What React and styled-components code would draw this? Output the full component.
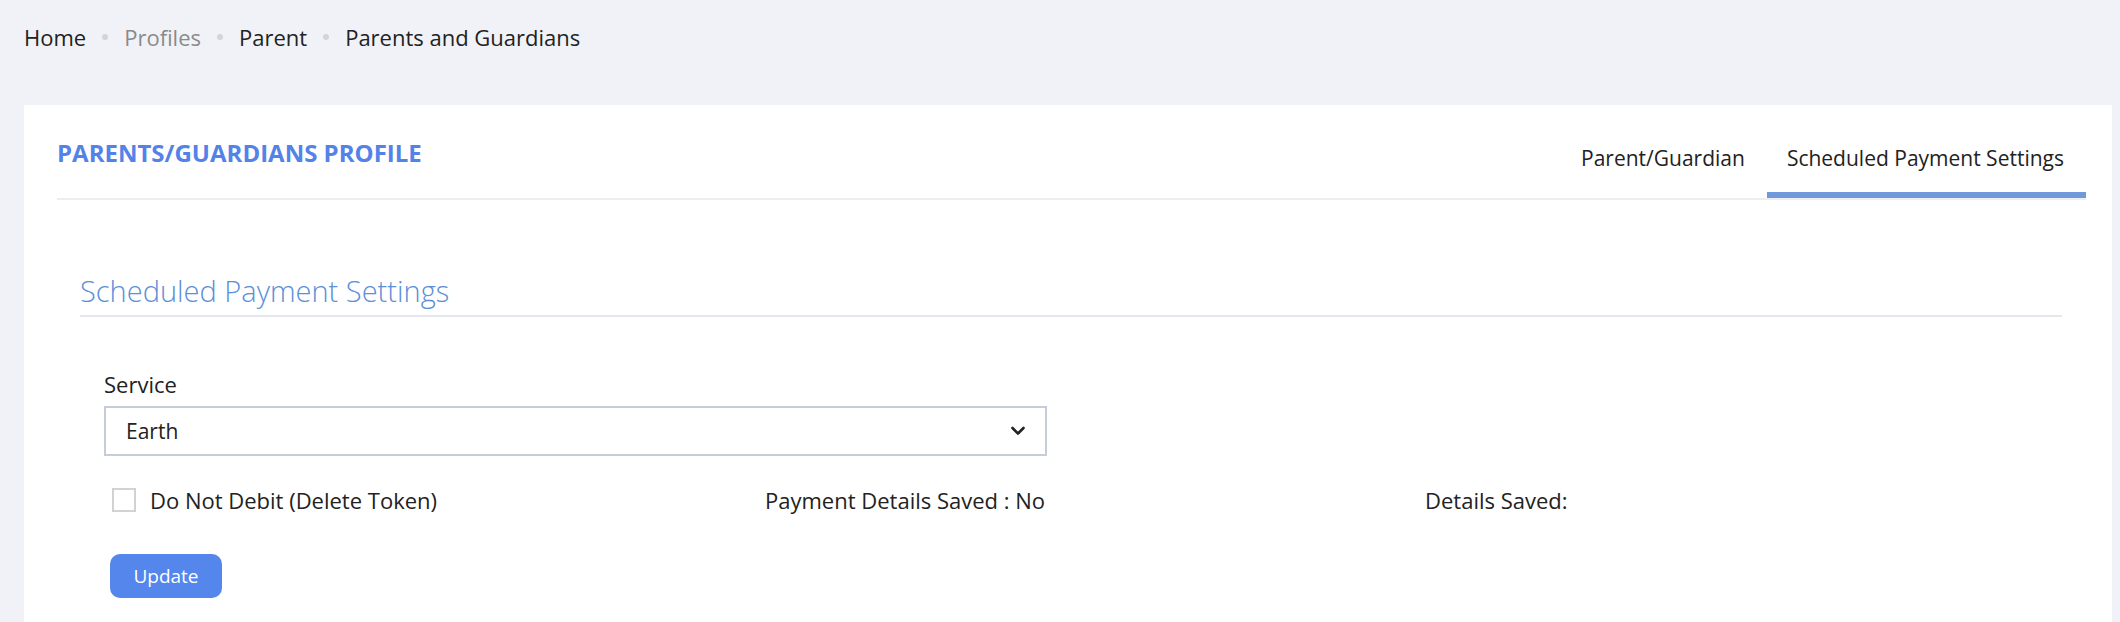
import React from "react";
import styled, { createGlobalStyle } from "styled-components";

const Global = createGlobalStyle`
  html, body { margin: 0; padding: 0; }
  body {
    background: #f1f2f7;
    font-family: "Open Sans", "Liberation Sans", sans-serif;
    color: #222;
  }
  * { box-sizing: border-box; }
`;

const Page = styled.div`
  display: flex;
  flex-direction: column;
  min-height: 622px;
`;

const Breadcrumb = styled.nav`
  display: flex;
  align-items: center;
  height: 74px;
  padding: 0 0 0 24px;
  margin-bottom: 31px;
`;

const Crumb = styled.span`
  font-size: 22px;
  line-height: 28px;
  color: ${(p) => (p.$muted ? "#8a8a8a" : "#222")};
`;

const Dot = styled.span`
  width: 6px;
  height: 6px;
  border-radius: 50%;
  background: #d3d4da;
  margin: 0 16px;
`;

const Card = styled.section`
  flex: 1;
  background: #fff;
  margin: 0 8px 0 24px;
  padding: 0 26px 40px 33px;
`;

const CardHeader = styled.header`
  display: flex;
  justify-content: space-between;
  align-items: flex-start;
  border-bottom: 2px solid #eceef1;
`;

const CardTitle = styled.h1`
  margin: 0;
  padding-top: 34px;
  font-size: 24px;
  line-height: 28px;
  font-weight: 700;
  color: #5383e8;
`;

const Tabs = styled.div`
  display: flex;
  align-items: flex-end;
`;

const Tab = styled.button`
  background: none;
  border: 0;
  border-bottom: 6px solid ${(p) => (p.$active ? "#7099dc" : "transparent")};
  padding: 39px 22px 20px 20px;
  margin: 0;
  font-family: inherit;
  font-size: 21px;
  line-height: 28px;
  color: #222;
  cursor: pointer;
`;

const Section = styled.div`
  margin: 72px 24px 0 23px;
`;

const SectionTitle = styled.h2`
  margin: 0;
  padding-bottom: 5px;
  border-bottom: 2px solid #e4e8ed;
  font-size: 29px;
  line-height: 38px;
  font-weight: 300;
  color: #5b8fd8;
`;

const Form = styled.div`
  padding: 53px 0 0 24px;
`;

const Label = styled.label`
  display: block;
  font-size: 22px;
  line-height: 28px;
  color: #222;
  margin-bottom: 8px;
`;

const SelectBox = styled.div`
  width: 943px;
  height: 50px;
  border: 2px solid #c5cdd9;
  display: flex;
  align-items: center;
  justify-content: space-between;
  padding: 0 20px;
  font-size: 21px;
  color: #222;
`;

const InfoRow = styled.div`
  display: grid;
  grid-template-columns: 661px 660px 1fr;
  align-items: center;
  margin-top: 30px;
`;

const CheckWrap = styled.label`
  display: flex;
  align-items: center;
  gap: 14px;
  padding-left: 8px;
  font-size: 22px;
  line-height: 28px;
`;

const CheckBox = styled.span`
  width: 24px;
  height: 24px;
  border: 2px solid #d2d2d2;
  background: #fff;
`;

const InfoText = styled.span`
  font-size: 22px;
  line-height: 28px;
  color: #222;
`;

const UpdateButton = styled.button`
  margin: 40px 0 0 6px;
  width: 112px;
  height: 44px;
  border: 0;
  border-radius: 10px;
  background: #5486ec;
  color: #fff;
  font-family: inherit;
  font-size: 19px;
  cursor: pointer;
`;

const Chevron = () => (
  <svg width="14" height="10" viewBox="0 0 14 10" fill="none">
    <polyline points="1.5,2 7,7.5 12.5,2" stroke="#222" strokeWidth="2.6" strokeLinecap="round" strokeLinejoin="round" />
  </svg>
);

export default function App() {
  return (
    <Page>
      <Global />
      <Breadcrumb>
        <Crumb>Home</Crumb>
        <Dot />
        <Crumb $muted>Profiles</Crumb>
        <Dot />
        <Crumb>Parent</Crumb>
        <Dot />
        <Crumb>Parents and Guardians</Crumb>
      </Breadcrumb>
      <Card>
        <CardHeader>
          <CardTitle>PARENTS/GUARDIANS PROFILE</CardTitle>
          <Tabs>
            <Tab>Parent/Guardian</Tab>
            <Tab $active>Scheduled Payment Settings</Tab>
          </Tabs>
        </CardHeader>
        <Section>
          <SectionTitle>Scheduled Payment Settings</SectionTitle>
          <Form>
            <Label>Service</Label>
            <SelectBox>
              <span>Earth</span>
              <Chevron />
            </SelectBox>
            <InfoRow>
              <CheckWrap>
                <CheckBox />
                Do Not Debit (Delete Token)
              </CheckWrap>
              <InfoText>Payment Details Saved : No</InfoText>
              <InfoText>Details Saved:</InfoText>
            </InfoRow>
            <UpdateButton>Update</UpdateButton>
          </Form>
        </Section>
      </Card>
    </Page>
  );
}
